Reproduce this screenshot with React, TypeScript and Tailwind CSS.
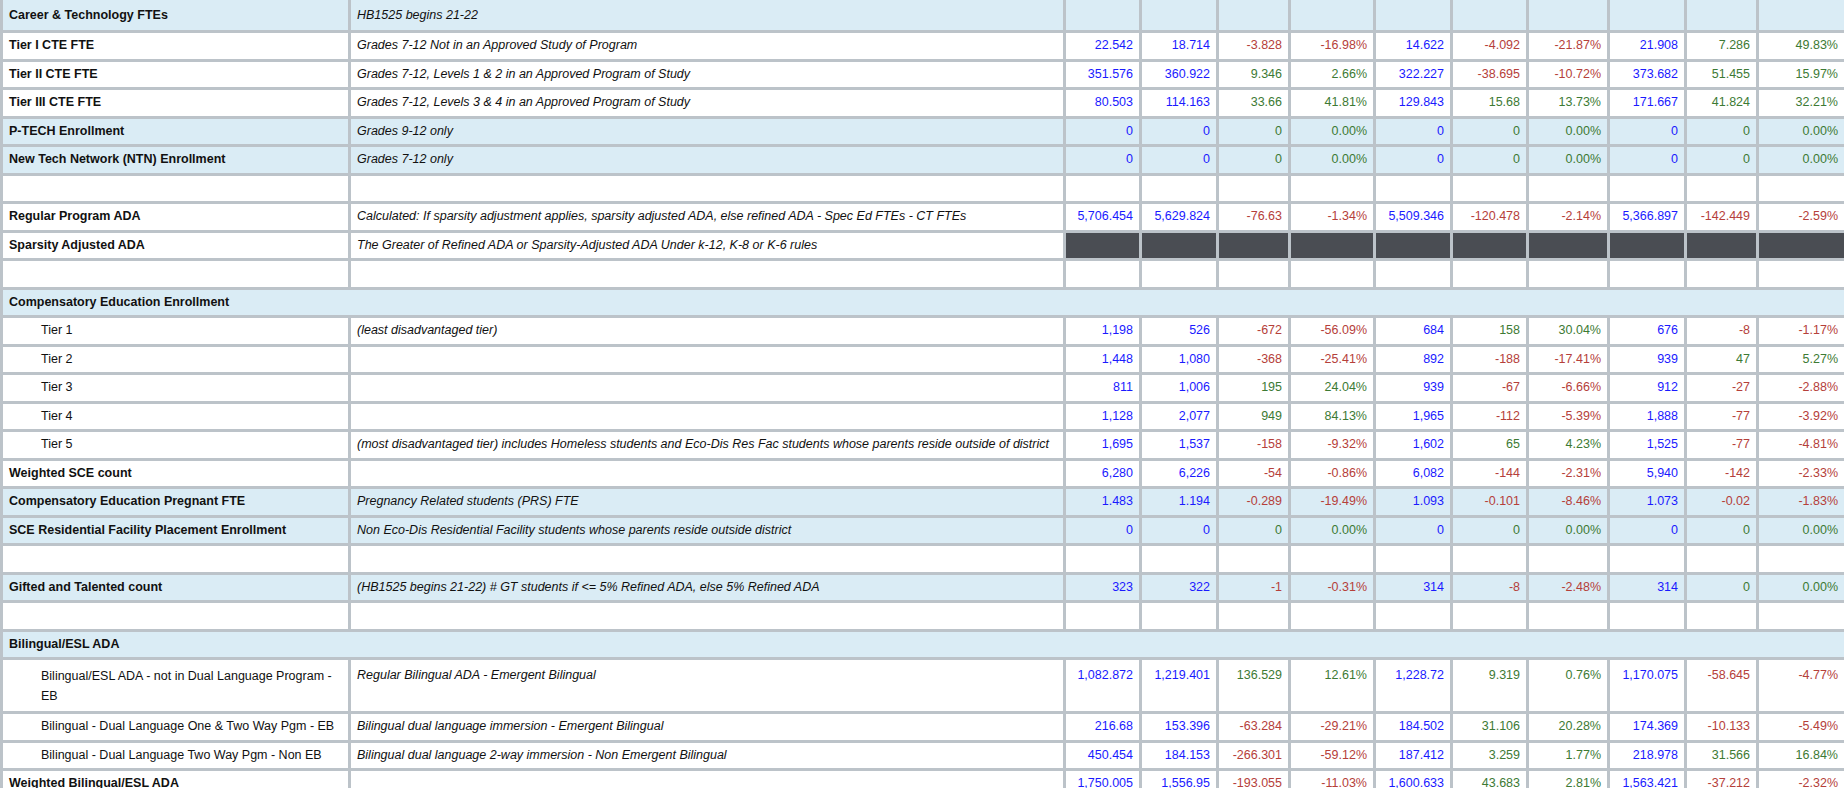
import React from "react";

type Row = {
  label?: string;
  desc?: string;
  bg?: "b" | "w";
  bold?: boolean;
  indent?: boolean;
  vals?: string[];
  span?: boolean;
  dark?: boolean;
  tall?: boolean;
  first?: boolean;
};

const rows: Row[] = [
  { label: "Career & Technology FTEs", desc: "HB1525 begins 21-22", bg: "b", bold: true, first: true, vals: ["", "", "", "", "", "", "", "", "", ""] },
  { label: "Tier I CTE FTE", desc: "Grades 7-12 Not in an Approved Study of Program", bold: true, vals: ["22.542", "18.714", "-3.828", "-16.98%", "14.622", "-4.092", "-21.87%", "21.908", "7.286", "49.83%"] },
  { label: "Tier II CTE FTE", desc: "Grades 7-12, Levels 1 & 2 in an Approved Program of Study", bold: true, vals: ["351.576", "360.922", "9.346", "2.66%", "322.227", "-38.695", "-10.72%", "373.682", "51.455", "15.97%"] },
  { label: "Tier III CTE FTE", desc: "Grades 7-12, Levels 3 & 4 in an Approved Program of Study", bold: true, vals: ["80.503", "114.163", "33.66", "41.81%", "129.843", "15.68", "13.73%", "171.667", "41.824", "32.21%"] },
  { label: "P-TECH Enrollment", desc: "Grades 9-12 only", bg: "b", bold: true, vals: ["0", "0", "0", "0.00%", "0", "0", "0.00%", "0", "0", "0.00%"] },
  { label: "New Tech Network (NTN) Enrollment", desc: "Grades 7-12 only", bg: "b", bold: true, vals: ["0", "0", "0", "0.00%", "0", "0", "0.00%", "0", "0", "0.00%"] },
  { vals: ["", "", "", "", "", "", "", "", "", ""] },
  { label: "Regular Program ADA", desc: "Calculated: If sparsity adjustment applies, sparsity adjusted ADA, else refined ADA - Spec Ed FTEs - CT FTEs", bold: true, vals: ["5,706.454", "5,629.824", "-76.63", "-1.34%", "5,509.346", "-120.478", "-2.14%", "5,366.897", "-142.449", "-2.59%"] },
  { label: "Sparsity Adjusted ADA", desc: "The Greater of Refined ADA or Sparsity-Adjusted ADA Under k-12, K-8 or K-6 rules", bold: true, dark: true },
  { vals: ["", "", "", "", "", "", "", "", "", ""] },
  { label: "Compensatory Education Enrollment", bg: "b", bold: true, span: true },
  { label: "Tier 1", desc: "(least disadvantaged tier)", indent: true, vals: ["1,198", "526", "-672", "-56.09%", "684", "158", "30.04%", "676", "-8", "-1.17%"] },
  { label: "Tier 2", indent: true, vals: ["1,448", "1,080", "-368", "-25.41%", "892", "-188", "-17.41%", "939", "47", "5.27%"] },
  { label: "Tier 3", indent: true, vals: ["811", "1,006", "195", "24.04%", "939", "-67", "-6.66%", "912", "-27", "-2.88%"] },
  { label: "Tier 4", indent: true, vals: ["1,128", "2,077", "949", "84.13%", "1,965", "-112", "-5.39%", "1,888", "-77", "-3.92%"] },
  { label: "Tier 5", desc: "(most disadvantaged tier) includes Homeless students and Eco-Dis Res Fac students whose parents reside outside of district", indent: true, vals: ["1,695", "1,537", "-158", "-9.32%", "1,602", "65", "4.23%", "1,525", "-77", "-4.81%"] },
  { label: "Weighted SCE count", bold: true, vals: ["6,280", "6,226", "-54", "-0.86%", "6,082", "-144", "-2.31%", "5,940", "-142", "-2.33%"] },
  { label: "Compensatory Education Pregnant FTE", desc: "Pregnancy Related students (PRS) FTE", bg: "b", bold: true, vals: ["1.483", "1.194", "-0.289", "-19.49%", "1.093", "-0.101", "-8.46%", "1.073", "-0.02", "-1.83%"] },
  { label: "SCE Residential Facility Placement Enrollment", desc: "Non Eco-Dis Residential Facility students whose parents reside outside district", bg: "b", bold: true, vals: ["0", "0", "0", "0.00%", "0", "0", "0.00%", "0", "0", "0.00%"] },
  { vals: ["", "", "", "", "", "", "", "", "", ""] },
  { label: "Gifted and Talented count", desc: "(HB1525 begins 21-22) # GT students if <= 5% Refined ADA, else 5% Refined ADA", bg: "b", bold: true, vals: ["323", "322", "-1", "-0.31%", "314", "-8", "-2.48%", "314", "0", "0.00%"] },
  { vals: ["", "", "", "", "", "", "", "", "", ""] },
  { label: "Bilingual/ESL ADA", bg: "b", bold: true, span: true },
  { label: "Bilingual/ESL ADA - not in Dual Language Program - EB", desc: "Regular Bilingual ADA - Emergent Bilingual", indent: true, tall: true, vals: ["1,082.872", "1,219.401", "136.529", "12.61%", "1,228.72", "9.319", "0.76%", "1,170.075", "-58.645", "-4.77%"] },
  { label: "Bilingual - Dual Language One & Two Way Pgm - EB", desc: "Bilingual dual language immersion - Emergent Bilingual", indent: true, vals: ["216.68", "153.396", "-63.284", "-29.21%", "184.502", "31.106", "20.28%", "174.369", "-10.133", "-5.49%"] },
  { label: "Bilingual - Dual Language Two Way Pgm - Non EB", desc: "Bilingual dual language 2-way immersion - Non Emergent Bilingual", indent: true, vals: ["450.454", "184.153", "-266.301", "-59.12%", "187.412", "3.259", "1.77%", "218.978", "31.566", "16.84%"] },
  { label: "Weighted Bilingual/ESL ADA", bold: true, vals: ["1,750.005", "1,556.95", "-193.055", "-11.03%", "1,600.633", "43.683", "2.81%", "1,563.421", "-37.212", "-2.32%"] },
  { vals: ["", "", "", "", "", "", "", "", "", ""] },
];

const widths = [348, 715, 76, 77, 72, 85, 77, 76, 81, 77, 72, 88];
const blueCols = [0, 1, 4, 7];

function color(i: number, v: string) {
  if (blueCols.includes(i)) return "text-[#1a1aff]";
  return v.startsWith("-") ? "text-[#b5403a]" : "text-[#3d7a34]";
}

export default function App() {
  return (
    <div className="w-[1844px] h-[788px] overflow-hidden bg-white" style={{ fontFamily: '"Liberation Sans", Arial, sans-serif' }}>
      <table className="border-collapse text-[12.5px] text-[#111] mt-[-3px]" style={{ tableLayout: "fixed", width: 1844 }}>
        <colgroup>
          {widths.map((w, i) => (
            <col key={i} style={{ width: w }} />
          ))}
        </colgroup>
        <tbody>
          {rows.map((r, ri) => {
            const bg = r.bg === "b" ? "bg-[#daecf5]" : "bg-white";
            const h = r.tall ? "h-[54px]" : r.first ? "h-[33px]" : "h-[28.5px]";
            const cell = "border-[3px] border-[#bcc3c9] px-[6px]";
            if (r.span) {
              return (
                <tr key={ri} className={`${bg} ${h}`}>
                  <td colSpan={12} className={`${cell} font-bold`}>{r.label}</td>
                </tr>
              );
            }
            return (
              <tr key={ri} className={`${bg} ${h}`}>
                <td className={`${cell} ${r.bold ? "font-bold" : ""} ${r.indent ? "pl-[38px]" : ""} ${r.tall ? "align-top pt-[6px] leading-[20px]" : ""}`}>{r.label}</td>
                <td className={`${cell} italic ${r.tall ? "align-top pt-[6px]" : ""}`}>{r.desc}</td>
                {r.dark
                  ? widths.slice(2).map((_, i) => <td key={i} className={`${cell} bg-[#4a4d53]`} />)
                  : (r.vals || Array(10).fill("")).map((v, i) => (
                      <td key={i} className={`${cell} text-right ${color(i, v)} ${r.tall ? "align-top pt-[6px]" : ""}`}>{v}</td>
                    ))}
              </tr>
            );
          })}
        </tbody>
      </table>
    </div>
  );
}
